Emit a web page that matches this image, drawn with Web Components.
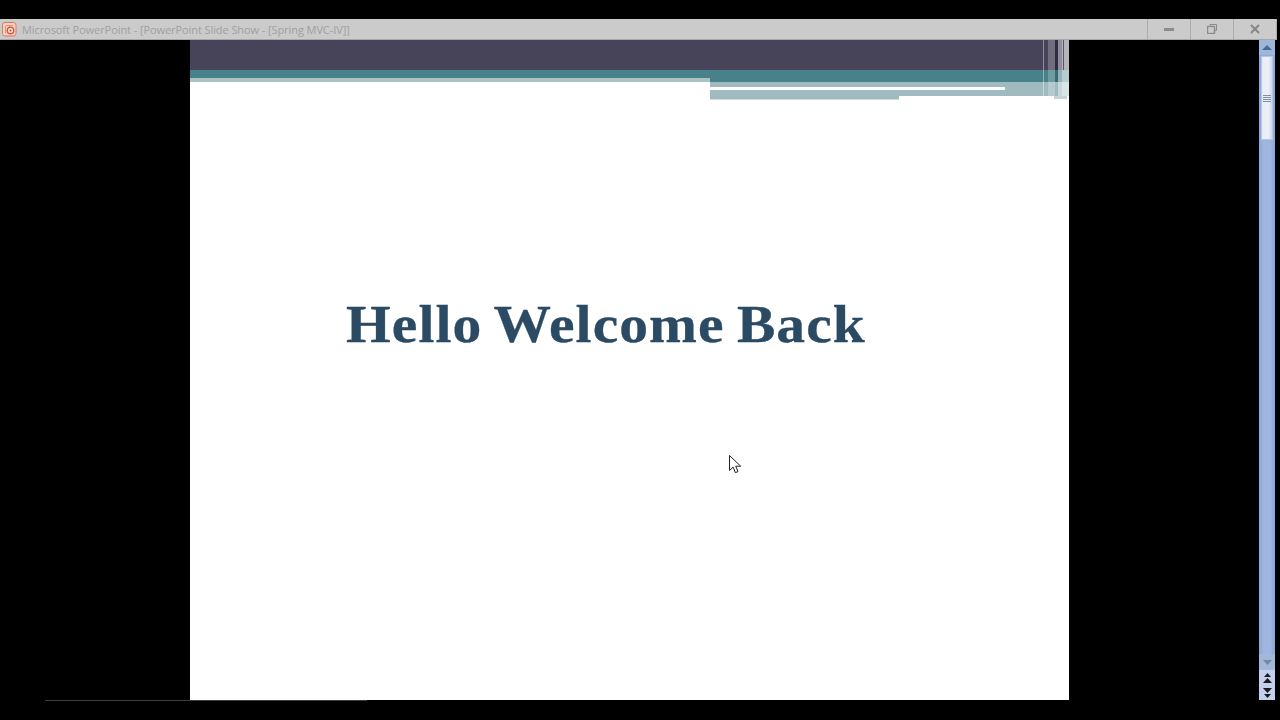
<!DOCTYPE html>
<html lang="en">
<head>
<meta charset="utf-8">
<title>Spring MVC-IV</title>
<style>
  html, body { margin: 0; padding: 0; background: #000; }
  body { width: 1280px; height: 720px; overflow: hidden; }
</style>
</head>
<body>
<show-window>
  <title-bar slot="title">Microsoft PowerPoint - [PowerPoint Slide Show - [Spring MVC-IV]]</title-bar>
  <slide-view>
    <h1-title>Hello Welcome Back</h1-title>
  </slide-view>
  <v-scrollbar slot="scroll"></v-scrollbar>
</show-window>

<script>
// outer window: black letterbox, title bar on top, slide and scrollbar below
class ShowWindow extends HTMLElement {
  constructor() {
    super();
    this.attachShadow({ mode: 'open' });
    this.shadowRoot.innerHTML = `
      <style>
        :host { display: flex; flex-direction: column; width: 1280px; height: 720px; background: #000; padding-top: 19px; box-sizing: border-box; }
        .main { display: flex; height: 660px; padding-left: 190px; padding-right: 5px; justify-content: space-between; }
        .foot { height: 1px; margin-left: 45px; width: 322px; background: #3c3c3c; }
      </style>
      <slot name="title"></slot>
      <div class="main">
        <slot></slot>
        <slot name="scroll"></slot>
      </div>
      <div class="foot"></div>
    `;
  }
}

class TitleBar extends HTMLElement {
  constructor() {
    super();
    this.attachShadow({ mode: 'open' });
    this.shadowRoot.innerHTML = `
      <style>
        :host { display: flex; align-items: center; width: 1277px; height: 21px; box-sizing: border-box; background: #cbcbcb; border-bottom: 1px solid #a8a8a8; font: 11px "Open Sans", "Liberation Sans", sans-serif; letter-spacing: -.08px; color: #a0a0a0; }
        svg { display: block; flex: none; }
        .logo { margin: 0 5px 0 2px; }
        .text { flex: 1; white-space: nowrap; }
        .btn { width: 43px; height: 20px; display: flex; align-items: center; justify-content: center; border-left: 1px solid #acacac; box-sizing: border-box; }
        .btn:last-child { width: 44px; border-right: 1px solid #acacac; }
      </style>
      <svg class="logo" width="15" height="15" viewBox="0 0 15 15">
        <rect x="0.5" y="0.5" width="13.500" height="13.500" rx="2.500" fill="#f6d3c6" stroke="#e0795c"/>
        <path d="M3.500 11V4.500a1 1 0 0 1 1-1H11" fill="none" stroke="#e58b70"/>
        <circle cx="8.500" cy="8.500" r="3.200" fill="#fbeee8" stroke="#d4593b" stroke-width="1.400"/>
        <circle cx="8.500" cy="8.500" r="1" fill="#c9391d"/>
      </svg>
      <span class="text"><slot></slot></span>
      <div class="btn"><svg width="10" height="4" viewBox="0 0 10 4"><rect y="1" width="10" height="3" fill="#8c8c8c"/></svg></div>
      <div class="btn"><svg width="10" height="10" viewBox="0 0 10 10" fill="none" stroke="#8c8c8c"><path d="M3 2.500V.5h6.500v6H8"/><rect x=".5" y="2.500" width="7" height="7" stroke-width="1.400"/></svg></div>
      <div class="btn"><svg width="10" height="10" viewBox="0 0 10 10" fill="none" stroke="#858585" stroke-width="2"><path d="M1 1l8 8M9 1L1 9"/></svg></div>
    `;
  }
}

// slide page: banner graphic on top, title in flow, pointer over it
class SlideView extends HTMLElement {
  constructor() {
    super();
    this.attachShadow({ mode: 'open' });
    this.shadowRoot.innerHTML = `
      <style>
        :host { display: block; position: relative; width: 879px; height: 660px; background: #fff; overflow: hidden; }
        svg.banner { display: block; }
        .body { padding: 191px 0 0 156px; }
        svg.cursor { position: absolute; left: 539px; top: 415px; }
      </style>
      <svg class="banner" width="879" height="62" viewBox="0 0 879 62">
        <rect width="879" height="30" fill="#47445a"/>
        <rect y="30" width="879" height="8" fill="#47818a"/>
        <rect y="38" width="520" height="4" fill="#aac2c6"/>
        <rect x="520" y="38" width="359" height="4" fill="#47818a"/>
        <rect x="520" y="42" width="359" height="14" fill="#a0bbc0"/>
        <rect x="520" y="47" width="295" height="3" fill="#fff"/>
        <rect x="520" y="56" width="189" height="3.500" fill="#9fbabf"/>
        <g fill="#fff">
          <rect x="853" width="1" height="56" opacity=".4"/>
          <rect x="858" width="7" height="56" opacity=".22"/>
          <rect x="872" width="7" height="56" opacity=".6"/>
          <rect x="868" width="4" height="56" opacity=".4"/>
        </g>
        <rect x="865" y="0" width="3" height="30" fill="#2f2d3e"/>
        <rect x="873" y="0" width="1" height="30" fill="#2f2d3e" opacity=".7"/>
        <rect x="865" y="30" width="3" height="12" fill="#3a6a72"/>
        <rect x="864" y="56" width="13" height="3" fill="#c3d3d6"/>
      </svg>
      <div class="body"><slot></slot></div>
      <svg class="cursor" width="12" height="19" viewBox="0 0 12 19">
        <path d="M.5.5v15l3.600-3.400 2.300 5.600 2.600-1.100-2.300-5.400h5z" fill="#fff" stroke="#222" stroke-width="1"/>
      </svg>
    `;
  }
}

// slide heading, Georgia-like: Liberation Serif stretched a bit to get the wide bold letters
class H1Title extends HTMLElement {
  constructor() {
    super();
    this.attachShadow({ mode: 'open' });
    this.shadowRoot.innerHTML = `
      <style>
        :host { display: block; font: bold 53px/62px "Liberation Serif", serif; color: #2b4a63; letter-spacing: 1px; word-spacing: -3px; white-space: nowrap; transform: scaleX(1.085); transform-origin: 0 0; -webkit-text-stroke: .3px #2b4a63; }
      </style>
      <slot></slot>
    `;
  }
}

class VScrollbar extends HTMLElement {
  constructor() {
    super();
    this.attachShadow({ mode: 'open' });
    this.shadowRoot.innerHTML = `
      <style>
        :host { display: flex; flex-direction: column; width: 16px; height: 660px; background: #8fabdb; box-sizing: border-box; }
        .btn { height: 16px; display: flex; align-items: center; justify-content: center; flex: none; }
        .up { background: #9db6dc; height: 15px; }
        .thumb { height: 84px; margin: 1px 2px 0; flex: none; box-sizing: border-box; border: 1px solid #b7c6e2; background: linear-gradient(90deg, #e6ebf6, #eef1f9 60%, #cdd7ea); display: flex; align-items: center; justify-content: center; }
        .track { flex: 1; background: linear-gradient(90deg, #8aa7da, #9fb6e0 30%, #9fb6e0 70%, #8aa7da); }
        .down { background: #a4b7d6; }
        .pager { background: #c2d0ee; height: 15px; }
        svg { display: block; }
      </style>
      <div class="btn up"><svg width="10" height="5" viewBox="0 0 10 5"><path d="M5 0L10 5H0z" fill="#4a6a92"/></svg></div>
      <div class="thumb"><svg width="8" height="7" viewBox="0 0 8 7" fill="#7e8ea6"><rect width="8" height="1"/><rect y="2" width="8" height="1"/><rect y="4" width="8" height="1"/><rect y="6" width="8" height="1"/></svg></div>
      <div class="track"></div>
      <div class="btn down"><svg width="9" height="5" viewBox="0 0 9 5"><path d="M0 0h9L4.500 5z" fill="#6f88ad"/></svg></div>
      <div class="btn pager"><svg width="9" height="10" viewBox="0 0 9 10" fill="#1a1a1a"><path d="M4.500 0L8 4H1zM4.500 5L9 10H0z"/></svg></div>
      <div class="btn pager"><svg width="9" height="10" viewBox="0 0 9 10" fill="#1a1a1a"><path d="M0 0h9L4.500 5zM1 6h7l-3.500 4z"/></svg></div>
    `;
  }
}

customElements.define('show-window', ShowWindow);
customElements.define('title-bar', TitleBar);
customElements.define('slide-view', SlideView);
customElements.define('h1-title', H1Title);
customElements.define('v-scrollbar', VScrollbar);
</script>
</body>
</html>
